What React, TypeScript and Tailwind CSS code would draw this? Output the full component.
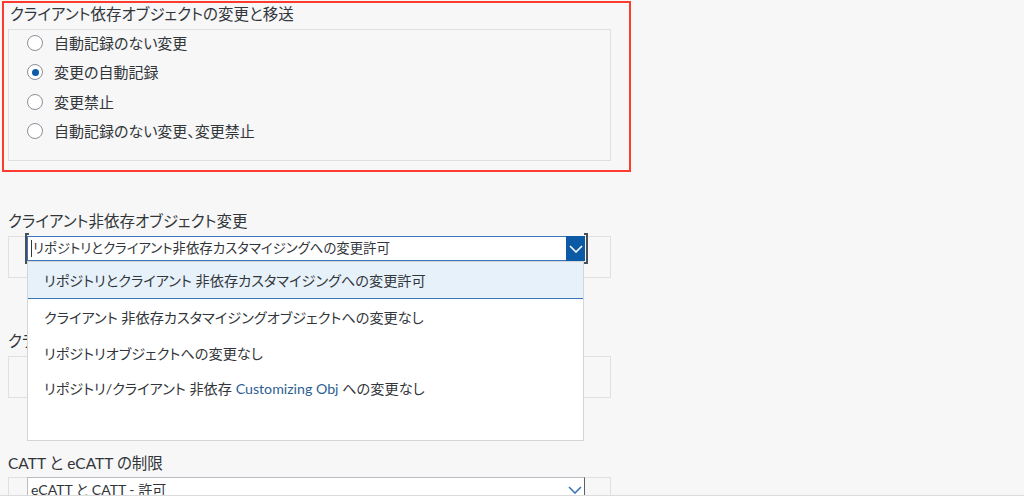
import React from "react"

const FONT = "font-['Lato','Noto_Sans_CJK_JP',sans-serif]"

const radios = [
  "自動記録のない変更",
  "変更の自動記録",
  "変更禁止",
  "自動記録のない変更、変更禁止",
]

function Radio({ label, checked }: { label: string; checked?: boolean }) {
  return (
    <div className="flex items-center h-[29.5px] gap-[11px]">
      <span className="w-[16px] h-[16px] rounded-full border border-[#89919a] bg-white flex items-center justify-center">
        {checked && <span className="w-[7px] h-[7px] rounded-full bg-[#0a5ca8]" />}
      </span>
      <span className="text-[15px] text-[#32363a] [font-feature-settings:'palt']">{label}</span>
    </div>
  )
}

function GroupTitle({ children }: { children: React.ReactNode }) {
  return (
    <div className="text-[15.5px] leading-[20px] text-[#32363a] [font-feature-settings:'palt'] pl-[8px] whitespace-nowrap">
      {children}
    </div>
  )
}

function Chevron({ color }: { color: string }) {
  return (
    <svg width="14" height="8" viewBox="0 0 14 8" fill="none">
      <path d="M1 1l6 6 6-6" stroke={color} strokeWidth="1.6" />
    </svg>
  )
}

const options = [
  { text: "リポジトリとクライアント 非依存カスタマイジングへの変更許可" },
  { text: "クライアント 非依存カスタマイジングオブジェクトへの変更なし" },
  { text: "リポジトリオブジェクトへの変更なし" },
]

export default function App() {
  return (
    <div className={`relative w-[1024px] h-[500px] overflow-hidden bg-[#f7f7f7] ${FONT}`}>
      {/* client-dependent objects, highlighted */}
      <div className="ml-[2px] mt-[1px] w-[629px] h-[171px] border-2 border-[#ff3b30]">
        <div className="pt-[1px] -ml-[2px]">
          <GroupTitle>クライアント依存オブジェクトの変更と移送</GroupTitle>
        </div>
        <div className="mt-[5px] ml-[4px] w-[603px] h-[132px] border border-[#e0e0e0] pl-[18px]">
          <div className="-mt-[2px]">
            {radios.map((r, i) => (
              <Radio key={r} label={r} checked={i === 1} />
            ))}
          </div>
        </div>
      </div>

      {/* client-independent objects */}
      <div className="mt-[39px]">
        <GroupTitle>クライアント非依存オブジェクト変更</GroupTitle>
        <div className="mt-[5px] ml-[8px] w-[603px] h-[42px] border border-[#e0e0e0] pl-[18px]">
          <div className="relative w-[558px] h-[25px] -mt-[1px] bg-white border border-[#3a76bd] flex items-center">
            <span className="ml-[3px] w-[1px] h-[17px] bg-[#32363a]" />
            <span className="ml-[1px] flex-1 text-[13.4px] text-[#32363a] [font-feature-settings:'palt'] whitespace-nowrap">
              リポジトリとクライアント非依存カスタマイジングへの変更許可
            </span>
            <span className="w-[19px] h-[25px] -mr-[1px] bg-[#0b5aa6] flex items-center justify-center">
              <Chevron color="#ffffff" />
            </span>
            {/* focus brackets */}
            <span className="absolute -left-[3px] -top-[4px] w-[4px] h-[31px] border-2 border-r-0 border-[#4a4f55]" />
            <span className="absolute -right-[4px] -top-[4px] w-[4px] h-[31px] border-2 border-l-0 border-[#4a4f55]" />

            {/* open list */}
            <div className="absolute -left-[1px] top-[24px] w-[557px] h-[180px] bg-white border border-[#d5d5d5] z-10 [font-feature-settings:'palt'] text-[14.2px] text-[#32363a] whitespace-nowrap">
              <div className="h-[37px] bg-[#e7f1fa] border-b border-[#3a76bd] flex items-center pl-[16px] pt-[2px]">
                {options[0].text}
              </div>
              <div className="h-[36px] flex items-center pl-[16px] pt-[2px]">{options[1].text}</div>
              <div className="h-[35px] flex items-center pl-[16px] pt-[2px]">{options[2].text}</div>
              <div className="h-[35px] flex items-center pl-[16px] pt-[2px]">
                リポジトリ/クライアント 非依存&nbsp;
                <span className="text-[#2d5f93]">Customizing Obj</span>
                &nbsp;への変更なし
              </div>
            </div>
          </div>
        </div>
      </div>

      {/* client-specific (mostly hidden behind the open list) */}
      <div className="mt-[53px]">
        <GroupTitle>クライアント固有オブジェクト変更</GroupTitle>
        <div className="mt-[5px] ml-[8px] w-[603px] h-[42px] border border-[#e0e0e0]" />
      </div>

      {/* CATT */}
      <div className="mt-[55px]">
        <GroupTitle>CATT と eCATT の制限</GroupTitle>
        <div className="mt-[4px] ml-[8px] w-[603px] h-[42px] border border-[#e0e0e0] pl-[18px]">
          <div className="w-[558px] h-[25px] -mt-[1px] bg-white border border-[#b9bec4] border-r-[#5b6067] flex items-center">
            <span className="ml-[3px] flex-1 text-[14px] text-[#32363a] [font-feature-settings:'palt']">
              eCATT と CATT - 許可
            </span>
            <span className="w-[19px] flex items-center justify-center">
              <Chevron color="#3a76bd" />
            </span>
          </div>
        </div>
      </div>

      <div className="absolute left-0 bottom-0 w-full h-[5px] bg-white border-t border-[#dcdcdc]" />
    </div>
  )
}
